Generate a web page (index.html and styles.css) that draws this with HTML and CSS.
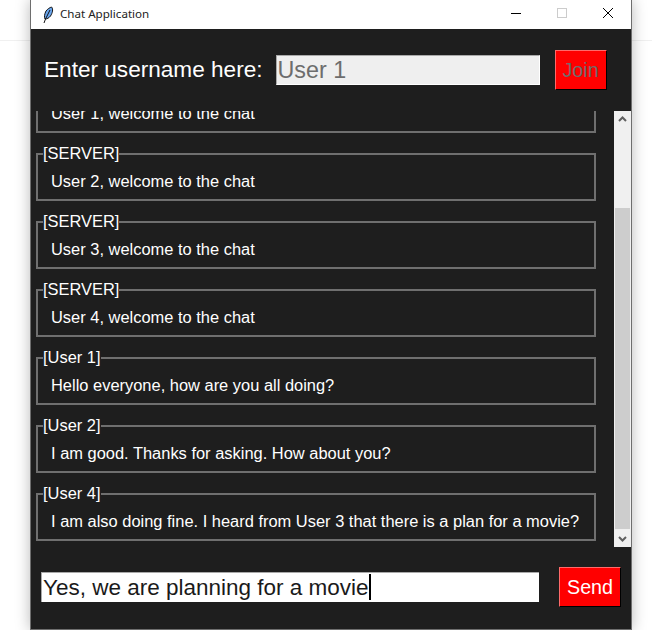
FILE: index.html
```html
<!DOCTYPE html>
<html>
<head>
    <link rel="stylesheet" href="styles.css">
</head>
<body>
    <div class="window">
        <div class="titlebar">
            <svg class="app-icon" width="12" height="18" viewBox="0 0 12 18">
                <path d="M9.500 1 C11.500 3 10.500 7 8.500 10 C7 12 5 13 3 13 C2 11 2.500 8 4 5 C5.500 3 8 1.500 9.500 1 Z" fill="#6aa6ee" stroke="#111" stroke-width="1"/>
                <path d="M8 4 L3.500 13 L2 17" fill="none" stroke="#111" stroke-width="1"/>
            </svg>
            <span class="title">Chat Application</span>
            <div class="controls">
                <svg width="46" height="29" viewBox="0 0 46 29"><path d="M18 13.500 H28" stroke="#000" fill="none"/></svg>
                <svg width="46" height="29" viewBox="0 0 46 29"><rect x="18.500" y="8.500" width="9" height="9" stroke="#ccc" fill="none"/></svg>
                <svg width="46" height="29" viewBox="0 0 46 29"><path d="M18 8 L28 18 M28 8 L18 18" stroke="#000" fill="none"/></svg>
            </div>
        </div>

        <div class="join-row">
            <label class="join-label">Enter username here:</label>
            <input class="name-input" type="text" value="User 1" disabled>
            <button class="btn join-btn">Join</button>
        </div>

        <div class="chat-pane">
            <div class="messages">
                <fieldset class="msg"><legend>[SERVER]</legend><p>User 1, welcome to the chat</p></fieldset>
                <fieldset class="msg"><legend>[SERVER]</legend><p>User 2, welcome to the chat</p></fieldset>
                <fieldset class="msg"><legend>[SERVER]</legend><p>User 3, welcome to the chat</p></fieldset>
                <fieldset class="msg"><legend>[SERVER]</legend><p>User 4, welcome to the chat</p></fieldset>
                <fieldset class="msg"><legend>[User 1]</legend><p>Hello everyone, how are you all doing?</p></fieldset>
                <fieldset class="msg"><legend>[User 2]</legend><p>I am good. Thanks for asking. How about you?</p></fieldset>
                <fieldset class="msg"><legend>[User 4]</legend><p>I am also doing fine. I heard from User 3 that there is a plan for a movie?</p></fieldset>
            </div>
            <div class="scrollbar">
                <svg class="arrow" width="17" height="17" viewBox="0 0 17 17"><path d="M5 10 L8.500 6.500 L12 10" fill="none" stroke="#606060" stroke-width="2"/></svg>
                <div class="track"><div class="thumb"></div></div>
                <svg class="arrow" width="17" height="17" viewBox="0 0 17 17"><path d="M5 7 L8.500 10.500 L12 7" fill="none" stroke="#606060" stroke-width="2"/></svg>
            </div>
        </div>

        <div class="send-row">
            <div class="msg-input">Yes, we are planning for a movie<span class="caret"></span></div>
            <button class="btn send-btn">Send</button>
        </div>
    </div>
</body>
</html>
```

FILE: styles.css
```css
body {
    margin: 0;
    height: 630px;
    overflow: hidden;
    background: linear-gradient(#fff 40px, #f0f0f0 40px, #f0f0f0 41px, #fff 41px);
    font-family: "Liberation Sans", Arial, sans-serif;
}

.window {
    width: 602px;
    height: 630px;
    box-sizing: border-box;
    margin-left: 30px;
    display: flex;
    flex-direction: column;
    background: #1e1e1e;
    border: 1px solid #6e6e6e;
    border-top: none;
    box-shadow: 0 0 14px rgba(0, 0, 0, 0.28);
}

.titlebar {
    height: 29px;
    flex-shrink: 0;
    display: flex;
    align-items: center;
    background: #fff;
    padding-left: 11px;
}

.app-icon {
    margin-right: 6px;
}

.title {
    font-family: "Noto Sans", sans-serif;
    font-size: 11.6px;
    color: #222;
    margin-top: -2px;
}

.controls {
    display: flex;
    margin-left: auto;
}

.controls svg {
    display: block;
}

.join-row {
    height: 82px;
    flex-shrink: 0;
    display: flex;
    align-items: center;
    padding-left: 13px;
}

.join-label {
    font-size: 22.6px;
    line-height: 26px;
    color: #fff;
    margin-right: 13px;
}

.name-input {
    width: 264px;
    height: 30px;
    box-sizing: border-box;
    border: none;
    border-top: 1px solid #a9a9a9;
    border-left: 1px solid #a9a9a9;
    border-right: 1px solid #fff;
    border-bottom: 1px solid #fff;
    padding: 0 1px;
    margin: 0 15px 0 0;
    background: #efefef;
    color: #6d6d6d;
    font-family: inherit;
    font-size: 23.3px;
}

.btn {
    padding: 0;
    background: #f00;
    border: 1px solid;
    border-color: #ff6a6a #000 #000 #ff6a6a;
    font-family: inherit;
    font-size: 19.7px;
    height: 40px;
}

.join-btn {
    width: 52px;
    color: #6d6d6d;
}

.send-btn {
    width: 62px;
    color: #fff;
}

.chat-pane {
    height: 436px;
    flex-shrink: 0;
    display: flex;
}

.messages {
    flex: 1;
    display: flex;
    flex-direction: column;
    justify-content: flex-end;
    gap: 12px;
    overflow: hidden;
    padding: 0 18px 6px 5px;
}

.msg {
    flex-shrink: 0;
    height: 56px;
    box-sizing: border-box;
    margin: 0;
    padding: 0 5px;
    border: 2px solid #6f6f6f;
    color: #fff;
    font-size: 16.45px;
}

.msg legend {
    height: 18px;
    padding: 0;
    line-height: 16px;
}

.msg p {
    margin: 0;
    padding: 9px 0 0 8px;
    line-height: 18px;
    white-space: nowrap;
}

.scrollbar {
    width: 17px;
    display: flex;
    flex-direction: column;
    background: #f0f0f0;
}

.arrow {
    display: block;
    flex-shrink: 0;
}

.track {
    flex: 1;
    padding: 80px 1px 0;
}

.thumb {
    height: 321px;
    background: #cdcdcd;
}

.send-row {
    flex: 1;
    display: flex;
    align-items: flex-start;
    padding: 20px 0 0 10px;
}

.msg-input {
    width: 498px;
    height: 30px;
    box-sizing: border-box;
    margin: 5px 20px 0 0;
    padding-left: 1px;
    background: #fff;
    border-top: 1px solid #a9a9a9;
    border-left: 1px solid #a9a9a9;
    color: #1a1a1a;
    font-size: 22.5px;
    line-height: 30px;
    white-space: nowrap;
}

.caret {
    display: inline-block;
    width: 2px;
    height: 26px;
    background: #000;
    vertical-align: -5px;
}
```
